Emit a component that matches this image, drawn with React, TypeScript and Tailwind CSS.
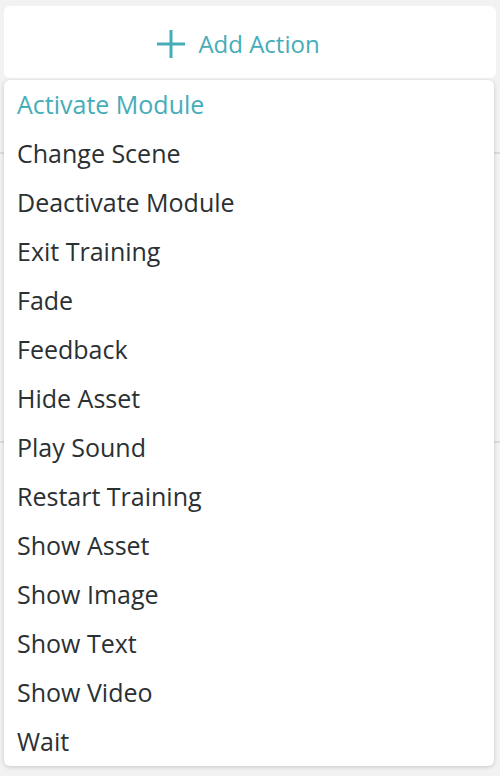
const actions = [
  "Activate Module",
  "Change Scene",
  "Deactivate Module",
  "Exit Training",
  "Fade",
  "Feedback",
  "Hide Asset",
  "Play Sound",
  "Restart Training",
  "Show Asset",
  "Show Image",
  "Show Text",
  "Show Video",
  "Wait",
]

export default function App() {
  return (
    <div
      className="relative w-[500px] h-[776px] overflow-hidden bg-[#f2f2f2]"
      style={{ fontFamily: '"Open Sans", "Liberation Sans", sans-serif' }}
    >
      {/* Add action button card */}
      <div className="pt-1.5 px-1">
        <button className="w-full h-[72px] pt-1 pr-[24px] bg-white rounded-md flex items-center justify-center gap-[12px] text-[#45adb8]">
          <svg className="w-[30px] h-[30px]" viewBox="0 0 30 30" fill="none" stroke="currentColor" strokeWidth={3}>
            <path d="M15 1v28M1 15h28" />
          </svg>
          <span className="text-[24px]">Add Action</span>
        </button>
      </div>

      {/* Content behind the menu */}
      <div className="h-[76px] border-b-2 border-[#dcdcdc]" />
      <div className="h-[289px] border-b-2 border-[#dcdcdc]" />

      {/* Dropdown menu */}
      <div className="absolute top-[80px] left-1 right-[6px] bg-white rounded-md shadow-[0_1px_4px_rgba(0,0,0,0.18)]">
        {actions.map((a, i) => (
          <div
            key={a}
            className={`h-[49px] flex items-center pl-[13px] text-[25px] ${
              i === 0 ? "text-[#45adb8]" : "text-[#2b3033]"
            }`}
          >
            {a}
          </div>
        ))}
      </div>
    </div>
  )
}
